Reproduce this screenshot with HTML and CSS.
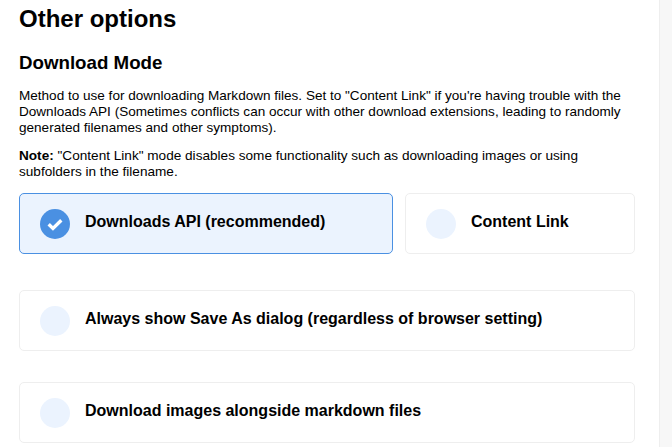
FILE: index.html
```html
<!DOCTYPE html>
<html>
    <head>
        <title>Other options</title>
        <meta charset="utf-8" />
        <link rel="stylesheet" href="styles.css">
    </head>
    <body>
        <div class="page">
            <main class="content">
                <h1>Other options</h1>
                <h2>Download Mode</h2>
                <p class="desc">Method to use for downloading Markdown files. Set to "Content Link" if you're having trouble with the Downloads API (Sometimes conflicts can occur with other download extensions, leading to randomly generated filenames and other symptoms).</p>
                <p class="note"><b>Note:</b> "Content Link" mode disables some functionality such as downloading images or using subfolders in the filename.</p>
                <div class="radioRow">
                    <div class="option optionMain checked">
                        <span class="check">
                            <svg viewBox="0 0 16 16" width="18" height="18"><path d="M2.4 8.2 6.2 11.9 13.6 4.6" fill="none" stroke="#fff" stroke-width="3"/></svg>
                        </span>
                        <span class="label">Downloads API (recommended)</span>
                    </div>
                    <div class="option optionSide">
                        <span class="check"></span>
                        <span class="label">Content Link</span>
                    </div>
                </div>
                <div class="option single">
                    <span class="check"></span>
                    <span class="label">Always show Save As dialog (regardless of browser setting)</span>
                </div>
                <div class="option single">
                    <span class="check"></span>
                    <span class="label">Download images alongside markdown files</span>
                </div>
            </main>
            <div class="scrollbar"></div>
        </div>
    </body>
</html>
```

FILE: styles.css
```css
html, body {
    margin: 0;
    height: 100%;
    overflow: hidden;
    background: #fff;
    font-family: "Liberation Sans", Arial, sans-serif;
    color: #000;
}
.page {
    display: flex;
    height: 447px;
}
.content {
    flex: 1;
    padding: 5px 24px 0 19px;
    overflow: hidden;
}
.scrollbar {
    width: 13px;
    background: #f7f7f7;
    border-left: 1px solid #eeeeee;
    box-sizing: border-box;
}
h1 {
    margin: 0;
    font-size: 24px;
    line-height: 28px;
}
h2 {
    margin: 19px 0 0;
    font-size: 18.72px;
    line-height: 22px;
}
.desc, .note {
    margin: 0;
    line-height: 16px;
}
.desc {
    margin-top: 14px;
    font-size: 13.55px;
}
.note {
    margin-top: 12px;
    font-size: 13.6px;
}
.radioRow {
    display: flex;
    gap: 12px;
    margin-top: 13px;
}
.option {
    display: flex;
    align-items: center;
    gap: 15px;
    height: 61px;
    box-sizing: border-box;
    padding: 0 20px;
    background: #fff;
    border: 1px solid #eeeeee;
    border-radius: 5px;
}
.optionMain {
    width: 374px;
}
.optionSide {
    flex: 1;
}
.single {
    margin-top: 31px;
}
.radioRow + .single {
    margin-top: 36px;
}
.checked {
    background: #ebf3fe;
    border-color: #4a90e2;
}
.check {
    display: flex;
    align-items: center;
    justify-content: center;
    flex: none;
    width: 30px;
    height: 30px;
    border-radius: 50%;
    background: #ebf3fe;
}
.checked .check {
    background: #4a90e2;
}
.label {
    position: relative;
    top: -2px;
    font-size: 16px;
    font-weight: bold;
}
```
